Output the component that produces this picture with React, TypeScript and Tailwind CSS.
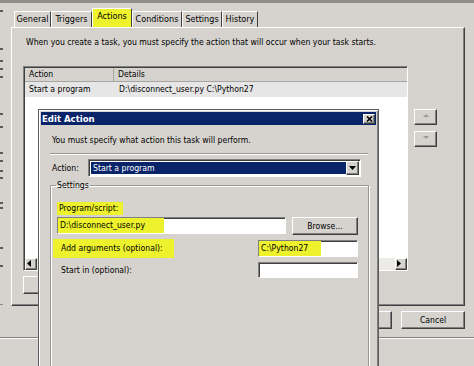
import React from "react";

const sunken = "border-t border-l border-t-[#808080] border-l-[#808080] border-b border-r border-b-white border-r-white shadow-[inset_1px_1px_0_#404040]";
const raised = "border-t border-l border-t-white border-l-white border-b border-r border-b-[#404040] border-r-[#404040] shadow-[inset_-1px_-1px_0_#808080]";

function LeftStrip() {
  const marks = [7, 45, 57, 65, 73, 110, 123, 149, 157, 167, 174, 199, 204, 244, 262];
  return (
    <div className="w-[11px] h-full">
      <svg width="11" height="334" viewBox="0 0 11 334">
        {marks.map((y, i) => (
          <rect key={i} x="0" y={y} width="3" height="2" fill="#5a5a5a" />
        ))}
        <rect x="0" y="301" width="3" height="1" fill="#8a8a8a" />
      </svg>
    </div>
  );
}

function Tabs() {
  const tabs = [
    { t: "General", w: "w-[37px]" },
    { t: "Triggers", w: "w-[41px]" },
    { t: "Actions", w: "w-[40px]", sel: true },
    { t: "Conditions", w: "w-[50px]" },
    { t: "Settings", w: "w-[40px]" },
    { t: "History", w: "w-[36px]" },
  ];
  return (
    <div className="h-[24px] flex items-end pl-[3px]">
      {tabs.map((tb) =>
        tb.sel ? (
          <div
            key={tb.t}
            className={`${tb.w} h-[19px] bg-[#eef22c] flex items-center justify-center border-t border-l border-white border-r border-r-[#404040] pb-[3px] text-[9px]`}
          >
            {tb.t}
          </div>
        ) : (
          <div
            key={tb.t}
            className={`${tb.w} h-[16px] flex items-center justify-center border-t border-l border-white border-r border-r-[#404040] text-[9px]`}
          >
            {tb.t}
          </div>
        )
      )}
    </div>
  );
}

function SmallArrow({ dir }: { dir: "up" | "down" | "left" | "right" }) {
  const pts: Record<string, string> = {
    up: "1,4 4,1 7,4",
    down: "1,1 4,4 7,1",
    left: "4,0 4,7 0,3.5",
    right: "0,0 0,7 4,3.5",
  };
  return (
    <svg width="8" height="8" viewBox="0 0 8 8">
      <polygon points={pts[dir]} fill={dir === "up" || dir === "down" ? "#9a9a9a" : "#000"} />
    </svg>
  );
}

function Panel() {
  return (
    <div className="h-[279px] border-t border-l border-white border-r border-b border-r-[#404040] border-b-[#404040] shadow-[inset_-1px_-1px_0_#808080] flex flex-col">
      <div className="pt-[9px] pl-[14px] whitespace-nowrap">
        When you create a task, you must specify the action that will occur when your task starts.
      </div>
      <div className="flex mt-[18px] ml-[11px]">
        <div className={`w-[385px] h-[205px] ${sunken} bg-white flex flex-col`}>
          <div className="h-[14px] flex bg-[#d6d3ce] border-b border-b-[#a8a6a2] ml-[1px] mt-[1px]">
            <div className="w-[89px] pl-[4px] flex items-center border-r border-r-[#a8a6a2]">Action</div>
            <div className="pl-[4px] flex items-center">Details</div>
          </div>
          <div className="h-[15px] flex bg-[#e6e6e6] ml-[1px] whitespace-nowrap">
            <div className="w-[90px] pl-[4px] flex items-center">Start a program</div>
            <div className="pl-[4px] flex items-center">D:\disconnect_user.py C:\Python27</div>
          </div>
          <div className="flex-1" />
          <div className="h-[12px] flex ml-[1px]">
            <div className={`w-[12px] h-[12px] bg-[#d6d3ce] ${raised} flex items-center justify-center`}>
              <SmallArrow dir="left" />
            </div>
            <div className="flex-1 bg-[#ecebe8]" />
            <div className={`w-[12px] h-[12px] bg-[#d6d3ce] ${raised} flex items-center justify-center`}>
              <SmallArrow dir="right" />
            </div>
          </div>
        </div>
        <div className="ml-[6px] mt-[43px] flex flex-col gap-[6px]">
          <div className={`w-[23px] h-[16px] ${raised} flex items-center justify-center`}>
            <SmallArrow dir="up" />
          </div>
          <div className={`w-[23px] h-[16px] ${raised} flex items-center justify-center`}>
            <SmallArrow dir="down" />
          </div>
        </div>
      </div>
      <div className={`mt-[5px] ml-[11px] w-[75px] h-[18px] ${raised} flex items-center justify-center`}>New...</div>
    </div>
  );
}

function Dialog() {
  return (
    <div className="absolute left-[38px] top-[109px] w-[341px] h-[270px] bg-[#d6d3ce] border border-[#5c5c5c] shadow-[inset_1px_1px_0_#ffffff,inset_-1px_-1px_0_#808080] p-[2px]">
      <div className="h-[13px] bg-[#0a246a] flex items-center justify-between pl-[1px] pr-[1px]">
        <span className="text-white font-bold text-[9.5px]">Edit Action</span>
        <div className={`w-[12px] h-[10px] bg-[#d6d3ce] ${raised} flex items-center justify-center`}>
          <svg width="7" height="6" viewBox="0 0 7 6">
            <path d="M1 0.5 L6 5.5 M6 0.5 L1 5.5" stroke="#000" strokeWidth="1.6" />
          </svg>
        </div>
      </div>
      <div className="mt-[10px] pl-[11px] whitespace-nowrap">
        You must specify what action this task will perform.
      </div>
      <div className="mt-[7px] ml-[9px] w-[318px]">
        <div className="h-px bg-[#9a9894]" />
        <div className="h-px bg-white" />
      </div>
      <div className="mt-[4px] h-[18px] flex items-center">
        <div className="ml-[11px] w-[36px]">Action:</div>
        <div className={`w-[273px] h-[18px] ${sunken} bg-white flex p-[1px]`}>
          <div className="flex-1 bg-[#0a246a] text-white flex items-center pl-[2px] ml-[1px] my-[1px]">Start a program</div>
          <div className={`w-[13px] bg-[#d6d3ce] ${raised} flex items-center justify-center`}>
            <svg width="7" height="4" viewBox="0 0 7 4">
              <polygon points="0,0 7,0 3.5,4" fill="#000" />
            </svg>
          </div>
        </div>
      </div>
      <fieldset className="mt-[3px] ml-[9px] w-[319px] h-[200px] border border-[#9a9894] shadow-[inset_1px_1px_0_#fff,1px_1px_0_#fff]">
        <legend className="ml-[5px] px-[1px]">Settings</legend>
        <div className="mt-[11px] ml-[6px] w-[66px] h-[13px] bg-[#eef22c] pl-[2px] flex items-center">Program/script:</div>
        <div className="mt-[2px] flex items-start">
          <div className={`ml-[6px] w-[229px] h-[17px] ${sunken} bg-white flex items-center`}>
            <span className="h-full w-[106px] bg-[#eef22c] pl-[2px] flex items-center whitespace-nowrap">D:\disconnect_user.py</span>
          </div>
          <div className={`ml-[6px] w-[66px] h-[18px] ${raised} flex items-center justify-center`}>Browse...</div>
        </div>
        <div className="mt-[4px] flex items-start">
          <div className="ml-[2px] w-[121px] h-[19px] bg-[#eef22c] pl-[8px] flex items-center whitespace-nowrap">Add arguments (optional):</div>
          <div className={`ml-[84px] mt-[1px] w-[100px] h-[17px] ${sunken} bg-white flex items-center`}>
            <span className="h-full w-[62px] bg-[#eef22c] pl-[2px] flex items-center whitespace-nowrap">C:\Python27</span>
          </div>
        </div>
        <div className="mt-[4px] flex items-center">
          <div className="ml-[10px] w-[197px] whitespace-nowrap">Start in (optional):</div>
          <div className={`w-[100px] h-[16px] ${sunken} bg-white`} />
        </div>
      </fieldset>
    </div>
  );
}

export default function App() {
  return (
    <div className="relative w-[474px] h-[366px] overflow-hidden bg-[#d6d3ce] text-[8.6px] leading-[11px] text-black font-['DejaVu_Sans_Condensed','Liberation_Sans',sans-serif]">
      <div className="h-[3px] bg-[#8e8c88]" />
      <div className="flex h-[334px]">
        <LeftStrip />
        <div className="w-[454px] flex flex-col">
          <Tabs />
          <Panel />
          <div className="mt-[5px] flex justify-end gap-[9px]">
            <div className={`w-[64px] h-[18px] ${raised} flex items-center justify-center`}>OK</div>
            <div className={`w-[64px] h-[18px] ${raised} flex items-center justify-center`}>Cancel</div>
          </div>
        </div>
      </div>
      <div className="h-px bg-[#808080]" />
      <div className="h-px bg-white" />
      <Dialog />
    </div>
  );
}
